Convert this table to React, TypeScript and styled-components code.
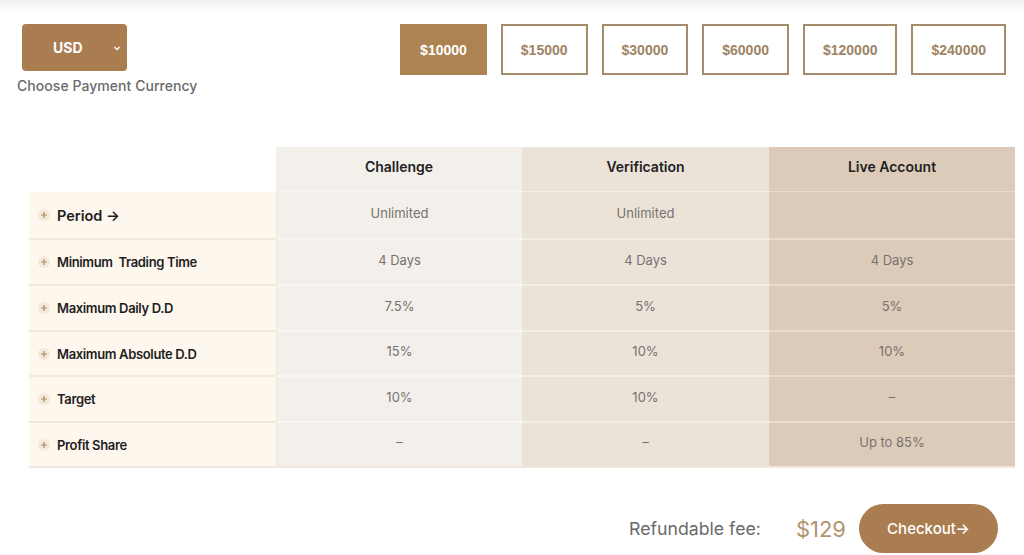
import React from "react";
import styled, { createGlobalStyle } from "styled-components";

const GlobalStyle = createGlobalStyle`
  html, body { margin: 0; padding: 0; }
  body {
    background: linear-gradient(#f1f1f1 0px, #ffffff 14px) no-repeat, #ffffff;
    font-family: Inter, "Noto Sans", sans-serif;
    width: 1024px;
    height: 555px;
    overflow: hidden;
  }
`;

const Page = styled.div`
  width: 1024px;
  height: 555px;
  display: flex;
  flex-direction: column;
`;

const TopBar = styled.div`
  display: flex;
  justify-content: space-between;
  align-items: flex-start;
  padding: 24px 18px 0 17px;
`;

const CurrencyBlock = styled.div`
  display: flex;
  flex-direction: column;
  align-items: flex-start;
`;

const CurrencyButton = styled.div`
  margin-left: 5px;
  width: 105px;
  height: 47px;
  box-sizing: border-box;
  background: #a97d50;
  border-radius: 4px;
  display: flex;
  align-items: center;
  padding: 0 5px 0 31px;
  color: #fff;
`;

const CurrencyText = styled.span`
  font-family: Inter, sans-serif;
  font-weight: 700;
  font-size: 14px;
  flex: 1;
`;

const Chevron = styled.svg`
  width: 10px;
  height: 10px;
`;

const CurrencyLabel = styled.div`
  margin-top: 6px;
  font-size: 14px;
  font-weight: 500;
  color: #6a6a6a;
  letter-spacing: 0.05px;
`;

const Amounts = styled.div`
  display: flex;
  gap: 14px;
`;

const AmountButton = styled.div<{ $active?: boolean }>`
  height: 51px;
  box-sizing: border-box;
  padding: 0 18px;
  display: flex;
  align-items: center;
  justify-content: center;
  border: 2px solid ${(p) => (p.$active ? "#ad8352" : "#a58a6c")};
  background: ${(p) => (p.$active ? "#ad8352" : "#ffffff")};
  color: ${(p) => (p.$active ? "#ffffff" : "#9e8464")};
  font-family: "Liberation Sans", Arial, sans-serif;
  font-weight: 700;
  font-size: 14px;
`;

const Table = styled.div`
  margin: 53px 0 0 29px;
  display: grid;
  grid-template-columns: 247px 246px 247px 246px;
`;

const colBg = ["#fef7ee", "#f3efea", "#ebe3d8", "#dccbb8"];
const colLine = ["#f1e7da", "#f9f6f2", "#f4eee6", "#ebdccb"];

const HeaderCell = styled.div<{ $col: number }>`
  height: 45px;
  display: flex;
  align-items: center;
  justify-content: center;
  background: ${(p) => (p.$col === 0 ? "transparent" : colBg[p.$col])};
  border-bottom: 1px solid ${(p) => (p.$col === 0 ? "transparent" : colLine[p.$col])};
  box-sizing: border-box;
  font-size: 14px;
  font-weight: 600;
  color: #222;
  padding-bottom: 5px;
`;

const Cell = styled.div<{ $col: number; $h: number; $last?: boolean }>`
  height: ${(p) => p.$h}px;
  box-sizing: border-box;
  background: ${(p) => colBg[p.$col]};
  border-bottom: 2px solid ${(p) => (p.$last ? "#f1e8dd" : colLine[p.$col])};
  border-left: ${(p) => (p.$col === 1 ? "1px solid #efe6dc" : "none")};
  display: flex;
  align-items: center;
  justify-content: center;
  padding-bottom: 5px;
  font-size: 13px;
  color: #777270;
`;

const LabelCell = styled.div<{ $h: number; $big?: boolean; $last?: boolean }>`
  height: ${(p) => p.$h}px;
  box-sizing: border-box;
  background: ${colBg[0]};
  border-bottom: 2px solid ${(p) => (p.$last ? "#f1e8dd" : colLine[0])};
  display: flex;
  align-items: center;
  gap: 7px;
  padding-left: 9px;
  font-size: ${(p) => (p.$big ? "14.5px" : "13px")};
  letter-spacing: ${(p) => (p.$big ? "0" : "-0.35px")};
  font-weight: 600;
  color: #1e1e1e;
`;

const PlusIcon = styled.svg`
  width: 12px;
  height: 12px;
  flex: none;
`;

const Footer = styled.div`
  display: flex;
  justify-content: flex-end;
  align-items: center;
  padding: 36px 26px 0 0;
`;

const FeeLabel = styled.span`
  font-size: 17.7px;
  color: #6a6a6a;
  margin-right: 35px;
`;

const FeeValue = styled.span`
  font-size: 22px;
  color: #b3946f;
  margin-right: 13px;
`;

const CheckoutButton = styled.div`
  width: 139px;
  height: 49px;
  border-radius: 25px;
  background: #a97d50;
  color: #fff;
  display: flex;
  align-items: center;
  justify-content: center;
  font-size: 15px;
  font-weight: 500;
`;

const Plus = () => (
  <PlusIcon viewBox="0 0 12 12">
    <circle cx="6" cy="6" r="6" fill="#f5e9da" />
    <path d="M6 3v6M3 6h6" stroke="#a98a68" strokeWidth="1.2" />
  </PlusIcon>
);

const amounts = ["$10000", "$15000", "$30000", "$60000", "$120000", "$240000"];

const rows: { label: string; big?: boolean; h: number; vals: string[] }[] = [
  { label: "Period →", big: true, h: 48, vals: ["Unlimited", "Unlimited", ""] },
  { label: "Minimum\u00a0 Trading Time", h: 46, vals: ["4 Days", "4 Days", "4 Days"] },
  { label: "Maximum Daily D.D", h: 46, vals: ["7.5%", "5%", "5%"] },
  { label: "Maximum Absolute D.D", h: 45, vals: ["15%", "10%", "10%"] },
  { label: "Target", h: 46, vals: ["10%", "10%", "–"] },
  { label: "Profit Share", h: 45, vals: ["–", "–", "Up to 85%"] },
];

export default function App() {
  return (
    <Page>
      <GlobalStyle />
      <TopBar>
        <CurrencyBlock>
          <CurrencyButton>
            <CurrencyText>USD</CurrencyText>
            <Chevron viewBox="0 0 10 10">
              <path d="M2.5 4l2.5 2.5L7.5 4" fill="none" stroke="#fff" strokeWidth="1.4" />
            </Chevron>
          </CurrencyButton>
          <CurrencyLabel>Choose Payment Currency</CurrencyLabel>
        </CurrencyBlock>
        <Amounts>
          {amounts.map((a, i) => (
            <AmountButton key={a} $active={i === 0}>
              {a}
            </AmountButton>
          ))}
        </Amounts>
      </TopBar>
      <Table>
        <HeaderCell $col={0} />
        <HeaderCell $col={1}>Challenge</HeaderCell>
        <HeaderCell $col={2}>Verification</HeaderCell>
        <HeaderCell $col={3}>Live Account</HeaderCell>
        {rows.map((r, ri) => {
          const last = ri === rows.length - 1;
          return (
            <React.Fragment key={r.label}>
              <LabelCell $h={r.h} $big={r.big} $last={last}>
                <Plus />
                {r.label}
              </LabelCell>
              {r.vals.map((v, vi) => (
                <Cell key={vi} $col={vi + 1} $h={r.h} $last={last}>
                  {v}
                </Cell>
              ))}
            </React.Fragment>
          );
        })}
      </Table>
      <Footer>
        <FeeLabel>Refundable fee:</FeeLabel>
        <FeeValue>$129</FeeValue>
        <CheckoutButton>Checkout→</CheckoutButton>
      </Footer>
    </Page>
  );
}
